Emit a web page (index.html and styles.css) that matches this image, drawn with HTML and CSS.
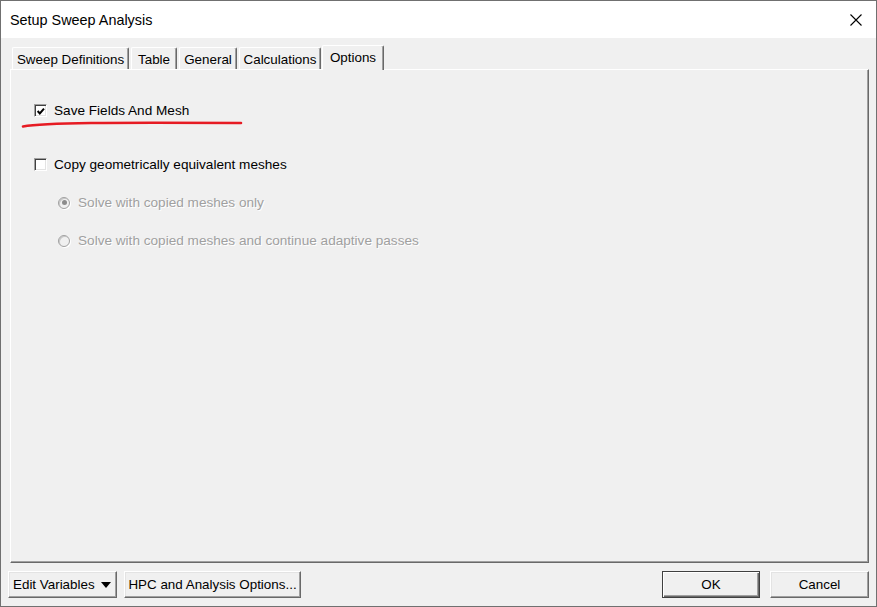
FILE: index.html
```html
<!DOCTYPE html>
<html>
<head>
<meta charset="utf-8">
<link rel="stylesheet" href="styles.css">
</head>
<body>
<div class="window">
  <div class="titlebar">
    <span class="title">Setup Sweep Analysis</span>
    <svg class="close" width="14" height="14" viewBox="0 0 14 14"><path d="M1.5 1.5 L12.5 12.5 M12.5 1.5 L1.5 12.5" stroke="#000" stroke-width="1.1" fill="none"/></svg>
  </div>
  <div class="client">
    <div class="tabs">
      <div class="tab t1">Sweep Definitions</div>
      <div class="tab t2">Table</div>
      <div class="tab t3">General</div>
      <div class="tab t4">Calculations</div>
      <div class="tab active t5">Options</div>
    </div>
    <div class="panel">
      <div class="opt first">
        <span class="cb"><svg width="11" height="11" viewBox="0 0 11 11"><path d="M1.8 5 L4.2 7.6 L8.8 2.4" stroke="#000" stroke-width="2.2" fill="none"/></svg></span>
        <span class="lbl">Save Fields And Mesh</span>
      </div>
      <div class="opt second">
        <span class="cb"></span>
        <span class="lbl">Copy geometrically equivalent meshes</span>
      </div>
      <div class="radio r1">
        <span class="rb on"></span>
        <span class="lbl dis">Solve with copied meshes only</span>
      </div>
      <div class="radio r2">
        <span class="rb"></span>
        <span class="lbl dis">Solve with copied meshes and continue adaptive passes</span>
      </div>
    </div>
    <div class="buttons">
      <div class="btn edit">Edit Variables <span class="arrow"></span></div>
      <div class="btn hpc">HPC and Analysis Options...</div>
      <div class="spacer"></div>
      <div class="btn ok default">OK</div>
      <div class="btn cancel">Cancel</div>
    </div>
  </div>
  <svg class="annot" width="877" height="607" viewBox="0 0 877 607"><path d="M23 126.5 C 45 122.5, 110 122.5, 241 123" stroke="#e61b23" stroke-width="2.6" fill="none" stroke-linecap="round"/></svg>
</div>
</body>
</html>
```

FILE: styles.css
```css
* { box-sizing: border-box; }
html, body { margin: 0; padding: 0; background: #f0f0f0; }
body { width: 877px; height: 607px; overflow: hidden; font-family: "Liberation Sans", Arial, sans-serif; font-size: 13.4px; color: #000; }

.window {
  position: relative;
  width: 877px;
  height: 607px;
  border: 1px solid #707070;
  background: #f0f0f0;
  display: flex;
  flex-direction: column;
}

.titlebar {
  height: 37px;
  background: #fff;
  display: flex;
  align-items: center;
  padding-left: 9px;
  padding-right: 13px;
  flex: none;
}
.title { font-size: 14.4px; flex: 1; color: #000; padding-top: 1px; }
.close { display: block; }

.client {
  flex: 1;
  display: flex;
  flex-direction: column;
  padding: 7px 7px 7px 9px;
}

.tabs {
  height: 24px;
  display: flex;
  align-items: flex-end;
  padding-left: 2px;
  flex: none;
}
.tab {
  height: 22px;
  margin-right: 2px;
  background: #f0f0f0;
  border-top: 1px solid #fff;
  border-left: 1px solid #fff;
  border-right: 1px solid #696969;
  box-shadow: inset -1px 0 0 #a0a0a0;
  border-radius: 2px 2px 0 0;
  display: flex;
  align-items: center;
  justify-content: center;
  white-space: nowrap;
  padding-top: 1px;
}
.t1 { width: 117px; }
.t2 { width: 46px; margin-right: 2px; }
.t3 { width: 58px; }
.t4 { width: 82px; margin-right: 1px; }
.t5 { width: 62px; }
.tab.active {
  height: 25px;
  margin-bottom: -1px;
  position: relative;
  z-index: 1;
  padding-bottom: 3px;
}

.panel {
  position: relative;
  height: 494px;
  flex: none;
  border-top: 1px solid #fff;
  border-left: 1px solid #fff;
  border-right: 1px solid #696969;
  border-bottom: 1px solid #696969;
  box-shadow: inset -1px -1px 0 #a0a0a0;
  padding: 33px 0 0 23px;
  display: flex;
  flex-direction: column;
  font-size: 13.6px;
}

.opt, .radio {
  display: flex;
  align-items: center;
  height: 15px;
}
.opt.second { margin-top: 39px; }
.radio { padding-left: 24px; }
.radio.r1 { margin-top: 23px; }
.radio.r2 { margin-top: 23px; }

.cb {
  width: 13px;
  height: 13px;
  background: #fff;
  border-top: 1px solid #a0a0a0;
  border-left: 1px solid #a0a0a0;
  border-right: 1px solid #fff;
  border-bottom: 1px solid #fff;
  box-shadow: inset 1px 1px 0 #404040, inset -1px -1px 0 #e3e3e3;
  margin-right: 7px;
  display: flex;
  align-items: center;
  justify-content: center;
  flex: none;
  padding: 1px 0 0 1px;
}
.cb svg { display: block; }

.rb {
  width: 12px;
  height: 12px;
  border-radius: 50%;
  background: #f0f0f0;
  border: 1px solid #a0a0a0;
  box-shadow: inset 1px 1px 0 #c8c8c8, 1px 1px 0 #fff;
  margin-right: 8px;
  flex: none;
  display: flex;
  align-items: center;
  justify-content: center;
}
.rb.on::after {
  content: "";
  width: 5px;
  height: 5px;
  border-radius: 50%;
  background: #8c8c8c;
}

.lbl { white-space: nowrap; }
.lbl.dis { color: #a0a0a0; text-shadow: 1px 1px 0 #fff; }

.buttons {
  flex: none;
  display: flex;
  margin-top: 8px;
  margin-left: -2px;
  height: 27px;
}
.btn {
  height: 27px;
  background: #f0f0f0;
  border-top: 1px solid #fff;
  border-left: 1px solid #fff;
  border-right: 1px solid #696969;
  border-bottom: 1px solid #696969;
  box-shadow: inset -1px -1px 0 #a0a0a0, inset 1px 1px 0 #e3e3e3;
  display: flex;
  align-items: center;
  justify-content: center;
  white-space: nowrap;
  color: #000;
}
.edit { width: 109px; justify-content: flex-start; padding-left: 4px; }
.edit .arrow {
  width: 0; height: 0;
  border-left: 5px solid transparent;
  border-right: 5px solid transparent;
  border-top: 6px solid #000;
  margin-left: 6px;
}
.hpc { width: 177px; margin-left: 7px; }
.spacer { flex: 1; }
.ok { width: 98px; margin-right: 10px; }
.ok.default {
  border: 1px solid #404040;
  box-shadow: inset 1px 1px 0 #fff, inset -1px -1px 0 #696969, inset -2px -2px 0 #a0a0a0;
}
.cancel { width: 99px; }

.annot { position: absolute; left: -1px; top: -1px; pointer-events: none; }
```
